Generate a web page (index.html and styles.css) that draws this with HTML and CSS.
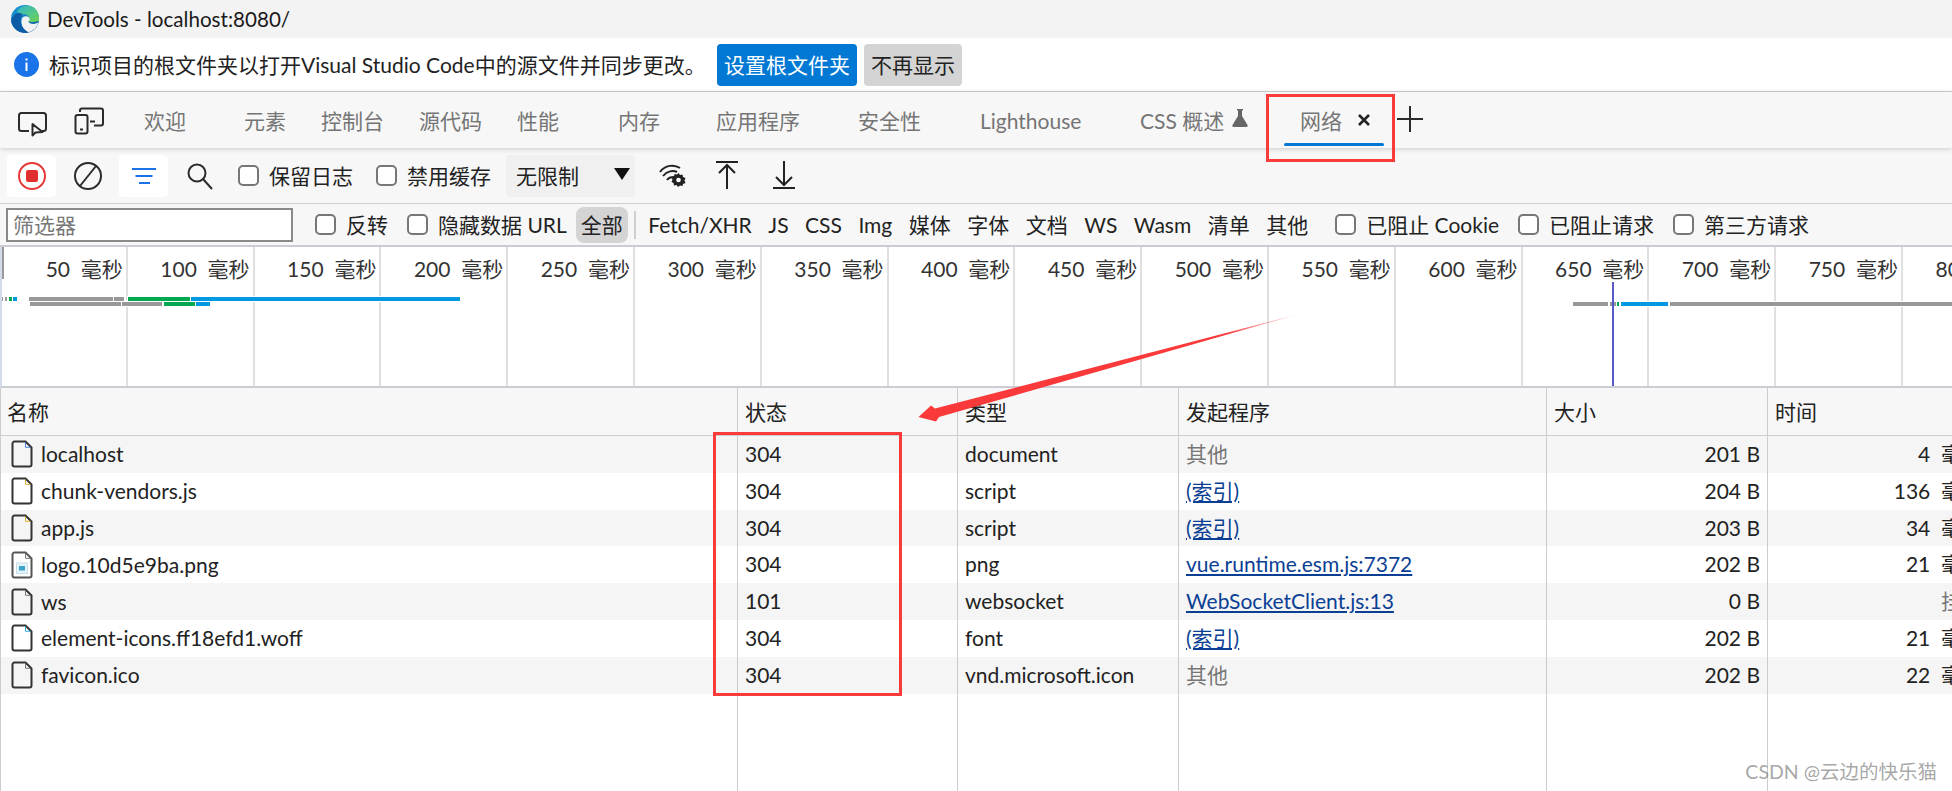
FILE: index.html
```html
<!DOCTYPE html>
<html lang="zh">
<head>
<meta charset="utf-8">
<title>DevTools - localhost:8080/</title>
<link rel="stylesheet" href="styles.css">
</head>
<body>
<header class="titlebar">
  <svg class="edge" viewBox="0 0 28 28" width="28" height="28">
    <defs>
      <linearGradient id="eb" x1="0" y1="0" x2="0.6" y2="1"><stop offset="0" stop-color="#1a9fd8"/><stop offset="1" stop-color="#0c5fa8"/></linearGradient>
      <linearGradient id="eg" x1="0" y1="0" x2="1" y2="1"><stop offset="0" stop-color="#2fb6d0"/><stop offset="1" stop-color="#6fd24f"/></linearGradient>
    </defs>
    <circle cx="14" cy="14" r="14" fill="url(#eb)"/>
    <path d="M6 6.5C9 1 15-.8 21 1.4 26 3.4 28.4 9 28 15.5 24 17.5 18.5 17.5 17 15.5 19 12.5 17.5 9.5 13.5 9.2 10.5 9 8 10.5 6 6.5Z" fill="url(#eg)"/>
    <path d="M10.5 15.5C10.5 11.5 15.5 10 18 12.5 19.4 14 18.5 16 17.2 16.8 19.5 19.6 24 19.6 27.4 17.6 26 22.5 22 26.5 17.5 27.4 13 26 9.8 21 10.5 15.5Z" fill="#f3f3f3"/>
    <path d="M2 12C4 7.5 8 7 11.5 9 9 11.5 9 17 11 21 12.5 24 15.5 26.6 18 27.4 9 29.5 1.2 23 .3 16.5.4 14.5 1 13 2 12Z" fill="#0d5ca6"/>
  </svg>
  <span>DevTools - localhost:8080/</span>
</header>

<section class="infobar">
  <svg class="info-icon" viewBox="0 0 25 25" width="25" height="25"><circle cx="12.5" cy="12.5" r="12.5" fill="#1a73e8"/><rect x="11.5" y="10.5" width="2" height="8.5" fill="#fff"/><rect x="11.5" y="6.5" width="2" height="2" fill="#fff"/></svg>
  <span class="info-text">标识项目的根文件夹以打开Visual Studio Code中的源文件并同步更改。</span>
  <button class="btn btn-primary">设置根文件夹</button>
  <button class="btn btn-muted">不再显示</button>
</section>

<nav class="tabbar">
  <svg class="tool-icon" viewBox="0 0 30 26" width="30" height="26" fill="none" stroke="#2b2b2b" stroke-width="2"><path d="M12 20H4.5A2.5 2.5 0 0 1 2 17.5V4.5A2.5 2.5 0 0 1 4.500 2h22A2.500 2.500 0 0 1 29 4.500v13a2.500 2.500 0 0 1-2.500 2.500H25"/><path d="M15.500 13v11.500l3-3 7-.5z" fill="#f7f7f7" stroke-linejoin="round"/></svg>
  <svg class="device-icon" viewBox="0 0 30 28" width="30" height="28" fill="none" stroke="#2b2b2b" stroke-width="2"><path d="M6 5V3.500A2 2 0 0 1 8 1.500h19a2 2 0 0 1 2 2v13a2 2 0 0 1-2 2h-7"/><rect x="1.500" y="8" width="12" height="18.500" rx="2"/><path d="M6 22.500h3M16 14.500h5"/></svg>
  <div class="tabs">
    <span class="tab">欢迎</span>
    <span class="tab">元素</span>
    <span class="tab">控制台</span>
    <span class="tab">源代码</span>
    <span class="tab">性能</span>
    <span class="tab">内存</span>
    <span class="tab">应用程序</span>
    <span class="tab">安全性</span>
    <span class="tab">Lighthouse</span>
    <span class="tab tab-flask">CSS 概述
      <svg viewBox="0 0 16 18" width="16" height="18"><path d="M5 0h6v1.500h-1V7l5.500 9a1.300 1.300 0 0 1-1.100 2H1.600a1.300 1.300 0 0 1-1.100-2L6 7V1.500H5z" fill="#666"/></svg>
    </span>
    <span class="tab tab-active">网络<svg class="tab-close" viewBox="0 0 12 12" width="12" height="12" stroke="#222" stroke-width="2.600"><path d="M1 1l10 10M11 1 1 11"/></svg></span>
    <svg class="tab-add" viewBox="0 0 26 26" width="26" height="26" stroke="#2b2b2b" stroke-width="2"><path d="M13 0v26M0 13h26"/></svg>
  </div>
</nav>

<section class="toolbar">
  <span class="tool-btn tool-btn-on">
    <svg viewBox="0 0 30 30" width="30" height="30"><circle cx="15" cy="15" r="13" fill="none" stroke="#e53935" stroke-width="2"/><rect x="9" y="9" width="12" height="12" rx="2" fill="#e03030"/></svg>
  </span>
  <span class="tool-btn">
    <svg viewBox="0 0 30 30" width="30" height="30" fill="none" stroke="#2b2b2b" stroke-width="2"><circle cx="15" cy="15" r="13"/><path d="M7 25 23 5"/></svg>
  </span>
  <span class="tool-btn tool-btn-on">
    <svg viewBox="0 0 26 18" width="26" height="18" stroke="#1a73e8" stroke-width="2"><path d="M1 2h24M4.500 9h17M8 16h11"/></svg>
  </span>
  <span class="tool-btn">
    <svg viewBox="0 0 28 28" width="28" height="28" fill="none" stroke="#2b2b2b" stroke-width="2"><circle cx="11" cy="11" r="8.500"/><path d="M17 17l9 10"/></svg>
  </span>
  <label class="check check-first"><span class="box"></span>保留日志</label>
  <label class="check check-next"><span class="box"></span>禁用缓存</label>
  <div class="throttle"><span>无限制</span><svg viewBox="0 0 16 12" width="16" height="12"><path d="M0 0h16L8 12z" fill="#111"/></svg></div>
  <svg class="wifi" viewBox="0 0 28 23" width="28" height="23" fill="none" stroke="#222" stroke-width="2"><path d="M1 8C6 1 15 0 21 4M4 12C8 7 14 6 18 8M8 16c2-3 5-3 7-3"/><path d="M19.500 9l1.500 2 2.500-.5.500 2.500 2.500 1-1 2.500 1 2.500-2.500 1-.5 2-2.500-.5-2 1.500-1.500-2-2.500.5-.5-2.500-2-1 1-2.500-1-2 2.500-1 .5-2.500 2.500.5z" fill="#222" stroke="none"/><circle cx="19.500" cy="16" r="2.300" fill="#fff" stroke="none"/></svg>
  <svg class="arrow-icon arrow-up" viewBox="0 0 22 28" width="22" height="28" fill="none" stroke="#222" stroke-width="2"><path d="M0 1h22M11 28V4M3 12l8-8 8 8"/></svg>
  <svg class="arrow-icon arrow-down" viewBox="0 0 22 28" width="22" height="28" fill="none" stroke="#222" stroke-width="2"><path d="M0 27h22M11 0v24M3 16l8 8 8-8"/></svg>
</section>

<section class="filterbar">
  <div class="filter-input">筛选器</div>
  <label class="check check-invert"><span class="box"></span>反转</label>
  <label class="check check-hide"><span class="box"></span>隐藏数据 URL</label>
  <span class="chip-all">全部</span>
  <span class="chip-sep"></span>
  <div class="chips">
    <span>Fetch/XHR</span><span>JS</span><span>CSS</span><span>Img</span><span>媒体</span><span>字体</span><span>文档</span><span>WS</span><span>Wasm</span><span>清单</span><span>其他</span>
  </div>
  <label class="check check-cookie"><span class="box"></span>已阻止 Cookie</label>
  <label class="check check-req"><span class="box"></span>已阻止请求</label>
  <label class="check check-req"><span class="box"></span>第三方请求</label>
</section>

<section class="timeline">
  <div class="ticks">
    <span class="tick">50&nbsp; 毫秒</span><span class="tick">100&nbsp; 毫秒</span><span class="tick">150&nbsp; 毫秒</span><span class="tick">200&nbsp; 毫秒</span>
    <span class="tick">250&nbsp; 毫秒</span><span class="tick">300&nbsp; 毫秒</span><span class="tick">350&nbsp; 毫秒</span><span class="tick">400&nbsp; 毫秒</span>
    <span class="tick">450&nbsp; 毫秒</span><span class="tick">500&nbsp; 毫秒</span><span class="tick">550&nbsp; 毫秒</span><span class="tick">600&nbsp; 毫秒</span>
    <span class="tick">650&nbsp; 毫秒</span><span class="tick">700&nbsp; 毫秒</span><span class="tick">750&nbsp; 毫秒</span><span class="tick">800&nbsp; 毫秒</span>
  </div>
  <i class="handle"></i>
  <i class="bar r1 gray" style="left:1px;width:2px"></i><i class="bar r1 gray" style="left:5px;width:2px"></i><i class="bar r1 green" style="left:9px;width:3px"></i><i class="bar r1 blue" style="left:13px;width:4px"></i>
  <i class="bar r1 gray" style="left:29px;width:84px"></i><i class="bar r1 gray" style="left:114px;width:10px"></i><i class="bar r1 green" style="left:128px;width:62px"></i><i class="bar r1 blue" style="left:191px;width:269px"></i>
  <i class="bar r2 gray" style="left:30px;width:91px"></i><i class="bar r2 gray" style="left:122px;width:40px"></i><i class="bar r2 green" style="left:164px;width:31px"></i><i class="bar r2 blue" style="left:196px;width:14px"></i>
  <i class="bar r2 gray" style="left:1573px;width:35px"></i><i class="bar r2 gray" style="left:1610px;width:6px"></i><i class="bar r2 green" style="left:1617px;width:2px"></i><i class="bar r2 blue" style="left:1621px;width:47px"></i><i class="bar r2 gray" style="left:1670px;width:282px"></i>
  <i class="marker"></i>
</section>

<section class="table">
  <div class="row head"><div>名称</div><div>状态</div><div>类型</div><div>发起程序</div><div>大小</div><div>时间</div></div>

  <div class="row odd"><div class="name"><svg viewBox="0 0 22 28" width="22" height="28" fill="none"><path d="M14.500 1.500h-11a2 2 0 0 0-2 2v21a2 2 0 0 0 2 2h15a2 2 0 0 0 2-2V7.500z" stroke="#333" stroke-width="2"/><path d="M14.500 2.500v4.800h5" stroke="#4a7fd8"/></svg>localhost</div><div>304</div><div>document</div><div class="muted">其他</div><div class="num">201 B</div><div class="num">4&nbsp; 毫秒</div></div>

  <div class="row"><div class="name"><svg viewBox="0 0 22 28" width="22" height="28" fill="none"><path d="M14.500 1.500h-11a2 2 0 0 0-2 2v21a2 2 0 0 0 2 2h15a2 2 0 0 0 2-2V7.500z" stroke="#333" stroke-width="2"/><path d="M14.500 2.500v4.800h5" stroke="#e0b030"/></svg>chunk-vendors.js</div><div>304</div><div>script</div><div><a href="#">(索引)</a></div><div class="num">204 B</div><div class="num">136&nbsp; 毫秒</div></div>

  <div class="row odd"><div class="name"><svg viewBox="0 0 22 28" width="22" height="28" fill="none"><path d="M14.500 1.500h-11a2 2 0 0 0-2 2v21a2 2 0 0 0 2 2h15a2 2 0 0 0 2-2V7.500z" stroke="#333" stroke-width="2"/><path d="M14.500 2.500v4.800h5" stroke="#e0b030"/></svg>app.js</div><div>304</div><div>script</div><div><a href="#">(索引)</a></div><div class="num">203 B</div><div class="num">34&nbsp; 毫秒</div></div>

  <div class="row"><div class="name"><svg viewBox="0 0 22 28" width="22" height="28" fill="none"><path d="M14.500 1.500h-11a2 2 0 0 0-2 2v21a2 2 0 0 0 2 2h15a2 2 0 0 0 2-2V7.500z" stroke="#555" stroke-width="2"/><path d="M14.500 2.500v4.800h5" stroke="#777"/><rect x="5.500" y="12" width="11" height="10.500" fill="#e6f3f8" stroke="#c5e0ea"/><rect x="8" y="15" width="6" height="4.500" fill="#3aa5c8"/></svg>logo.10d5e9ba.png</div><div>304</div><div>png</div><div><a href="#">vue.runtime.esm.js:7372</a></div><div class="num">202 B</div><div class="num">21&nbsp; 毫秒</div></div>

  <div class="row odd"><div class="name"><svg viewBox="0 0 22 28" width="22" height="28" fill="none"><path d="M14.500 1.500h-11a2 2 0 0 0-2 2v21a2 2 0 0 0 2 2h15a2 2 0 0 0 2-2V7.500z" stroke="#333" stroke-width="2"/><path d="M14.500 2.500v4.800h5" stroke="#777"/></svg>ws</div><div>101</div><div>websocket</div><div><a href="#">WebSocketClient.js:13</a></div><div class="num">0 B</div><div class="num muted">挂起</div></div>

  <div class="row"><div class="name"><svg viewBox="0 0 22 28" width="22" height="28" fill="none"><path d="M14.500 1.500h-11a2 2 0 0 0-2 2v21a2 2 0 0 0 2 2h15a2 2 0 0 0 2-2V7.500z" stroke="#333" stroke-width="2"/><path d="M14.500 2.500v4.800h5" stroke="#30b0d8"/></svg>element-icons.ff18efd1.woff</div><div>304</div><div>font</div><div><a href="#">(索引)</a></div><div class="num">202 B</div><div class="num">21&nbsp; 毫秒</div></div>

  <div class="row odd"><div class="name"><svg viewBox="0 0 22 28" width="22" height="28" fill="none"><path d="M14.500 1.500h-11a2 2 0 0 0-2 2v21a2 2 0 0 0 2 2h15a2 2 0 0 0 2-2V7.500z" stroke="#333" stroke-width="2"/><path d="M14.500 2.500v4.800h5" stroke="#777"/></svg>favicon.ico</div><div>304</div><div>vnd.microsoft.icon</div><div class="muted">其他</div><div class="num">202 B</div><div class="num">22&nbsp; 毫秒</div></div>

  <div class="row filler"><div></div><div></div><div></div><div></div><div></div><div></div></div>
</section>

<div class="mark mark-tab"></div>
<div class="mark mark-status"></div>
<svg class="mark-arrow" viewBox="0 0 1952 791" width="1952" height="791">
  <defs><linearGradient id="fade" gradientUnits="userSpaceOnUse" x1="1303" y1="313" x2="1225" y2="334"><stop offset="0" stop-color="#fa3a3a" stop-opacity="0"/><stop offset="1" stop-color="#fa3a3a"/></linearGradient></defs>
  <path d="M918.500 417 931 405.500 935 408.500 1303 313 939 417 936 421.500z" fill="url(#fade)"/>
</svg>
<div class="watermark">CSDN @云边的快乐猫</div>
</body>
</html>
```

FILE: styles.css
```css
* { box-sizing: border-box; }
html, body { margin: 0; height: 791px; overflow: hidden; }
body {
  position: relative;
  width: 1952px;
  display: flex;
  flex-direction: column;
  background: #fff;
  color: #222;
  font: 21px/30px Lato, "Noto Sans CJK SC", sans-serif;
}

.titlebar {
  height: 38px;
  flex: none;
  display: flex;
  align-items: center;
  padding: 0 0 0 11px;
  gap: 8px;
  background: #f3f3f3;
  color: #1a1a1a;
  font-size: 20.600px;
}

.infobar {
  height: 54px;
  flex: none;
  display: flex;
  align-items: center;
  padding-left: 14px;
  background: #fff;
  border-bottom: 1px solid #cfcfcf;
}
.info-text { margin-left: 10px; width: 668px; white-space: nowrap; }
.btn {
  height: 42px;
  border: 0;
  border-radius: 4px;
  padding: 0;
  font: inherit;
}
.btn-primary { width: 140px; background: #0078d4; color: #fff; }
.btn-muted { width: 98px; margin-left: 7px; background: #d4d4d4; color: #222; }

.tabbar {
  height: 56px;
  flex: none;
  display: flex;
  align-items: center;
  background: #f7f7f7;
  box-shadow: 0 1px 5px rgba(0,0,0,.18);
  position: relative;
  z-index: 1;
}
.tool-icon { margin: 8px 0 0 17px; flex: none; }
.device-icon { margin: 2px 0 0 27px; flex: none; }
.tabs {
  margin-left: 40px;
  display: grid;
  grid-template-columns: 100px 77px 98px 98px 101px 98px 142px 122px 160px 160px 97px auto;
  align-items: center;
  height: 100%;
}
.tab { color: #757575; white-space: nowrap; padding-top: 2px; }
.tab-flask { display: flex; align-items: center; gap: 8px; }
.tab-flask svg { margin-top: -6px; }
.tab-active { position: relative; display: flex; align-items: center; height: 100%; }
.tab-active::after {
  content: "";
  position: absolute;
  left: -16px;
  width: 100px;
  bottom: 2px;
  height: 3px;
  border-radius: 2px;
  background: #0078d4;
}
.tab-close { margin-left: 16px; margin-top: -2px; flex: none; }
.tab-add { margin-top: -2px; }

.toolbar {
  height: 56px;
  flex: none;
  display: flex;
  align-items: center;
  padding-left: 7px;
  gap: 7px;
  background: #f7f7f7;
  border-bottom: 1px solid #cfcfcf;
}
.tool-btn {
  width: 49px;
  height: 42px;
  flex: none;
  display: flex;
  align-items: center;
  justify-content: center;
  border-radius: 4px;
}
.tool-btn-on { background: #fff; }
.check { display: flex; align-items: center; white-space: nowrap; color: #222; flex: none; }
.box {
  width: 21px;
  height: 21px;
  margin-right: 10px;
  border: 2px solid #777;
  border-radius: 5px;
  background: #fff;
  flex: none;
}
.check-first { margin-left: 7px; }
.check-next { margin-left: 16px; }
.throttle {
  width: 129px;
  height: 42px;
  margin-left: 8px;
  padding: 0 5px 0 10px;
  display: flex;
  align-items: center;
  justify-content: space-between;
  background: #f0f0f0;
  border-radius: 4px;
  flex: none;
}
.throttle svg { margin: -4px 0 0 0; }
.wifi { margin-left: 17px; flex: none; }
.arrow-up { margin: -2px 0 0 22px; flex: none; }
.arrow-down { margin: -2px 0 0 28px; flex: none; }

.filterbar {
  height: 43px;
  flex: none;
  display: flex;
  align-items: center;
  background: #f7f7f7;
  border-bottom: 2px solid #cbcbd3;
}
.filter-input {
  width: 287px;
  height: 34px;
  margin-left: 6px;
  padding-left: 5px;
  border: 2px solid #8a8a8a;
  background: #fff;
  color: #777;
  line-height: 30px;
}
.check-invert { margin-left: 22px; }
.check-hide { margin-left: 19px; }
.chip-all {
  width: 52px;
  height: 36px;
  margin-left: 9px;
  line-height: 36px;
  text-align: center;
  border-radius: 8px;
  background: #d4d4d4;
  flex: none;
}
.chip-sep { width: 2px; height: 28px; margin-left: 6px; background: #cfcfcf; flex: none; }
.chips { display: flex; gap: 16.500px; margin-left: 12.500px; white-space: nowrap; flex: none; }
.check-cookie { margin-left: 27px; }
.check-req { margin-left: 19px; }

.timeline {
  height: 141px;
  flex: none;
  position: relative;
  overflow: hidden;
  border-left: 2px solid #d3dcec;
  border-bottom: 2px solid #cbcdd4;
  background: #fff;
}
.ticks { display: flex; margin-left: -1px; width: 2040px; height: 100%; }
.tick {
  flex: 0 0 126.800px;
  text-align: right;
  padding-right: 3px;
  border-right: 2px solid #e0e0e0;
  line-height: 44px;
  white-space: nowrap;
  color: #333;
}
.handle { position: absolute; left: -2px; top: 0; width: 4px; height: 32px; background: #999; }
.bar {
  position: absolute;
  height: 4px;
  margin-left: -2px;
  box-shadow: 0 0 0 1px #fff;
}
.r1 { top: 50px; }
.r2 { top: 55px; }
.gray { background: #989898; }
.green { background: #00a94f; }
.blue { background: #0098e0; }
.marker { position: absolute; left: 1610px; top: 35px; bottom: 0; width: 2px; background: #5a5ac4; }

.table { flex: 1; display: flex; flex-direction: column; width: 1990px; min-height: 0; border-left: 1px solid #ccc; }
.row {
  display: grid;
  grid-template-columns: 736px 220px 221px 368px 221px 223px;
  height: 36.800px;
  line-height: 36px;
  flex: none;
}
.row > div { padding: 0 7px; border-left: 1px solid #ccc; white-space: nowrap; overflow: hidden; }
.row > div:first-child { border-left: 0; }
.head { height: 48px; line-height: 48px; background: #f7f7f7; border-bottom: 1px solid #ccc; }
.row.head > div:first-child { padding-left: 6px; }
.odd { background: #f5f5f5; }
.row > .name { display: flex; align-items: center; gap: 8px; padding-left: 10px; }
.name svg { flex: none; }
.muted { color: #777; }
.row > .num { text-align: right; }
a { color: #0b3f94; }
.row.filler { flex: 1; }

.mark { position: absolute; border: 3px solid #fb3a3a; pointer-events: none; }
.mark-tab { left: 1266px; top: 94px; width: 129px; height: 68px; z-index: 2; }
.mark-status { left: 713px; top: 432px; width: 189px; height: 264px; }
.mark-arrow { position: absolute; left: 0; top: 0; pointer-events: none; z-index: 2; }
.watermark {
  position: absolute;
  right: 15px;
  top: 757px;
  font-size: 19.500px;
  color: rgba(110,110,110,.62);
  white-space: nowrap;
}
```
